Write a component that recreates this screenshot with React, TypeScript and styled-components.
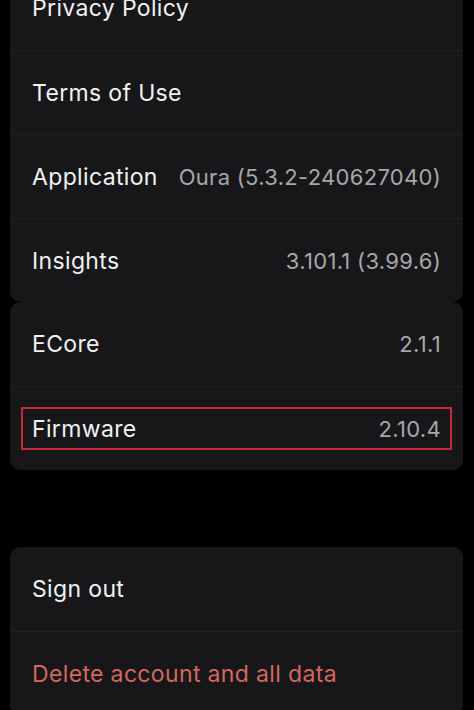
import React from 'react';
import styled, { createGlobalStyle } from 'styled-components';

const GlobalStyle = createGlobalStyle`
  html, body {
    margin: 0;
    padding: 0;
    background: #000;
  }
  body {
    font-family: Inter, "Liberation Sans", sans-serif;
    -webkit-font-smoothing: antialiased;
  }
`;

// page is scrolled, so the first row sits partly above the top edge
const Page = styled.div`
  width: 474px;
  height: 710px;
  overflow: hidden;
  background: #000;
`;

const Content = styled.div`
  display: flex;
  flex-direction: column;
  margin-top: -34px;
  padding: 0 11px 0 10px;
`;

const Card = styled.section<{ $gapTop?: number }>`
  display: flex;
  flex-direction: column;
  background: #17171a;
  border-radius: 10px;
  margin-top: ${(p) => p.$gapTop ?? 0}px;
  overflow: hidden;
`;

const Row = styled.div<{ $highlight?: boolean }>`
  display: flex;
  align-items: center;
  height: 84px;
  padding: 0 ${(p) => (p.$highlight ? 11 : 22)}px;
  box-sizing: border-box;

  & + & {
    border-top: 1px solid #1e1e22;
  }
`;

const Inner = styled.div<{ $highlight?: boolean }>`
  flex: 1;
  display: flex;
  align-items: center;
  justify-content: space-between;
  gap: 20px;
  height: ${(p) => (p.$highlight ? '43px' : 'auto')};
  padding: 0 ${(p) => (p.$highlight ? 9 : 0)}px;
  border: ${(p) => (p.$highlight ? '2px solid #c42a36' : 'none')};
  box-sizing: border-box;
`;

const Label = styled.span<{ $danger?: boolean }>`
  font-size: 23px;
  letter-spacing: 0.35px;
  color: ${(p) => (p.$danger ? '#d4675f' : '#f1f1f2')};
  white-space: nowrap;
`;

const Value = styled.span`
  font-size: 22px;
  letter-spacing: 0.3px;
  color: #a6a6ab;
  white-space: nowrap;
`;

type Item = { label: string; value?: string; highlight?: boolean; danger?: boolean };

const aboutItems: Item[] = [
  { label: 'Privacy Policy' },
  { label: 'Terms of Use' },
  { label: 'Application', value: 'Oura (5.3.2-240627040)' },
  { label: 'Insights', value: '3.101.1 (3.99.6)' },
];

const ringItems: Item[] = [
  { label: 'ECore', value: '2.1.1' },
  { label: 'Firmware', value: '2.10.4', highlight: true },
];

const accountItems: Item[] = [
  { label: 'Sign out' },
  { label: 'Delete account and all data', danger: true },
];

const SettingsRow: React.FC<{ item: Item }> = ({ item }) => (
  <Row $highlight={item.highlight}>
    <Inner $highlight={item.highlight}>
      <Label $danger={item.danger}>{item.label}</Label>
      {item.value && <Value>{item.value}</Value>}
    </Inner>
  </Row>
);

const App: React.FC = () => {
  return (
    <Page>
      <GlobalStyle />
      <Content>
        <Card>
          {aboutItems.map((item) => (
            <SettingsRow key={item.label} item={item} />
          ))}
        </Card>

        <Card>
          {ringItems.map((item) => (
            <SettingsRow key={item.label} item={item} />
          ))}
        </Card>

        {/* account actions */}
        <Card $gapTop={77}>
          {accountItems.map((item) => (
            <SettingsRow key={item.label} item={item} />
          ))}
        </Card>
      </Content>
    </Page>
  );
};

export default App;
